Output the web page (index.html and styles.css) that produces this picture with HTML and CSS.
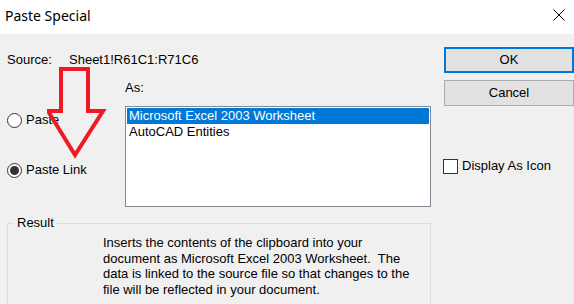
FILE: index.html
```html
<!DOCTYPE html>
<html>
  <head>
    <meta name="viewport" content="width=device-width, initial-scale=1" />
    <title>Paste Special</title>
    <link rel="stylesheet" href="styles.css">
  </head>

  <body>
    <section class="window">
      <header class="titlebar">
        <span class="title">Paste Special</span>
        <svg class="close" width="12" height="12" viewBox="0 0 12 12">
          <path d="M0.5 0.5 L11.5 11.5 M11.5 0.5 L0.5 11.5" stroke="#000" stroke-width="1" fill="none" />
        </svg>
      </header>

      <div class="dialog">
        <div class="main">
          <div class="source">
            <span class="source-label">Source:</span>
            <span>Sheet1!R61C1:R71C6</span>
          </div>

          <div class="choice">
            <div class="radios">
              <label class="radio"><span class="dot"></span>Paste</label>
              <label class="radio checked"><span class="dot"></span>Paste Link</label>
            </div>
            <div class="as">
              <div class="as-label">As:</div>
              <ul class="listbox">
                <li class="selected">Microsoft Excel 2003 Worksheet</li>
                <li>AutoCAD Entities</li>
              </ul>
            </div>
          </div>

          <fieldset class="result">
            <legend>Result</legend>
            <p>
              Inserts the contents of the clipboard into your<br>
              document as Microsoft Excel 2003 Worksheet.&nbsp; The<br>
              data is linked to the source file so that changes to the<br>
              file will be reflected in your document.
            </p>
          </fieldset>

          <!-- red arrow drawn over the dialog -->
          <svg class="arrow" width="110" height="100" viewBox="0 0 110 100">
            <polygon points="14,9 41,9 41,51 56,51 28,95 1,51 14,51" fill="none" stroke="#ed1c24" stroke-width="4" stroke-linejoin="miter" />
          </svg>
        </div>

        <div class="side">
          <button type="button" class="btn default">OK</button>
          <button type="button" class="btn">Cancel</button>
          <label class="check"><span class="box"></span>Display As Icon</label>
        </div>
      </div>
    </section>
  </body>
</html>
```

FILE: styles.css
```css
/* ------------------------------ reset ------------------------------ */
* {
  margin: 0;
  padding: 0;
  box-sizing: border-box;
}

body {
  width: 574px;
  height: 304px;
  overflow: hidden;
  font-family: "Liberation Sans", Arial, sans-serif;
  font-size: 13px;
  line-height: 16px;
  color: #000;
  background: #f0f0f0;
}

/* ------------------------------ title bar ------------------------------ */
.titlebar {
  height: 34px;
  background: #fff;
  display: flex;
  align-items: center;
  justify-content: space-between;
  padding: 0 9px 0 5px;
}
.title {
  font-family: "Noto Sans", "Open Sans", sans-serif;
  font-size: 14px;
  margin-top: -2px;
}
.close {
  margin-top: -4px;
}

/* ------------------------------ structure ------------------------------ */
.dialog {
  display: flex;
  gap: 13px;
  padding-left: 7px;
}
.main {
  position: relative;
  width: 424px;
  padding-top: 18px;
}
.side {
  width: 130px;
  padding-top: 13px;
  display: flex;
  flex-direction: column;
}

.source {
  display: flex;
}
.source-label {
  width: 62px;
}

.choice {
  display: flex;
  margin-top: 12px;
}
.radios {
  width: 118px;
  padding-top: 32px;
}
.radio {
  display: flex;
  align-items: center;
  gap: 4px;
  height: 16px;
}
.radio + .radio {
  margin-top: 34px;
}
.dot {
  width: 15px;
  height: 15px;
  border: 1px solid #333;
  border-radius: 50%;
  background: #fff;
  display: flex;
  align-items: center;
  justify-content: center;
}
.radio.checked .dot::after {
  content: "";
  width: 9px;
  height: 9px;
  border-radius: 50%;
  background: #333;
}

.as {
  flex: 1;
}
.as-label {
  height: 26px;
}
.listbox {
  list-style: none;
  width: 306px;
  height: 101px;
  background: #fff;
  border: 1px solid #828790;
  padding: 1px;
}
.listbox li {
  height: 16px;
  padding-left: 2px;
}
.listbox li.selected {
  background: #0078d7;
  color: #fff;
}

.result {
  margin-top: 8px;
  border: 1px solid #dcdcdc;
  border-bottom: 0;
  height: 100px;
  padding: 0;
}
.result legend {
  margin-left: 6px;
  padding: 0 3px;
  line-height: 16px;
}
.result p {
  line-height: 15.6px;
  margin-top: 4px;
  padding-left: 95px;
}

.arrow {
  position: absolute;
  left: 40px;
  top: 26px;
}

/* ------------------------------ buttons ------------------------------ */
.btn {
  font: inherit;
  color: #000;
  height: 26px;
  background: #e1e1e1;
  border: 1px solid #adadad;
}
.btn + .btn {
  margin-top: 7px;
}
.btn.default {
  border: 2px solid #0078d7;
}

.check {
  display: flex;
  align-items: center;
  gap: 4px;
  margin-top: 52px;
  margin-left: -1px;
}
.box {
  width: 15px;
  height: 15px;
  border: 1px solid #333;
  background: #fff;
}
```
